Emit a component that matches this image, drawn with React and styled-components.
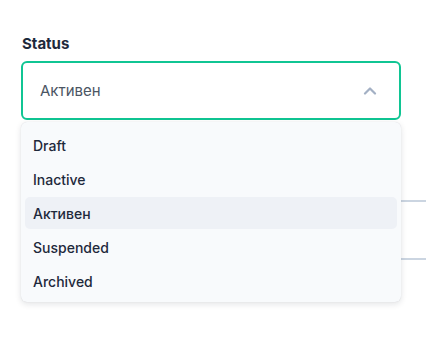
import React from "react";
import styled, { createGlobalStyle } from "styled-components";

const Global = createGlobalStyle`
  html, body { margin: 0; padding: 0; background: #ffffff; }
  body { font-family: Inter, "Noto Sans", sans-serif; -webkit-font-smoothing: antialiased; }
`;

const Page = styled.div`
  width: 426px;
  height: 341px;
  position: relative;
  overflow: hidden;
  padding: 34px 25px 0 21px;
  box-sizing: border-box;
`;

const Label = styled.div`
  font-size: 15px;
  font-weight: 700;
  color: #1e293b;
  line-height: 20px;
  margin: 0 0 7px 1px;
`;

const Field = styled.div`
  position: relative;
  width: 380px;
`;

const Trigger = styled.div`
  box-sizing: border-box;
  height: 59px;
  border: 2px solid #10c593;
  border-radius: 6px;
  display: flex;
  align-items: center;
  justify-content: space-between;
  padding: 0 22px 0 17px;
  font-size: 15px;
  color: #4b5563;
  background: #fff;
`;

const Behind = styled.div`
  display: flex;
  flex-direction: column;
  gap: 56px;
  margin-top: 80px;
  margin-left: 380px;
`;

const Line = styled.div`
  height: 2px;
  width: 30px;
  background: #cbd5e1;
`;

const Menu = styled.ul`
  position: absolute;
  top: 61px;
  left: 0;
  right: 0;
  margin: 0;
  list-style: none;
  padding: 7px 4px 5px;
  background: #f8fafc;
  border-radius: 6px;
  box-shadow: 0 2px 6px rgba(15, 23, 42, 0.12), 0 0 1px rgba(15, 23, 42, 0.15);
  display: flex;
  flex-direction: column;
  gap: 2px;
`;

const Item = styled.li`
  height: 32px;
  display: flex;
  align-items: center;
  padding: 0 8px;
  border-radius: 5px;
  font-size: 14px;
  font-weight: 500;
  color: #1e293b;
  background: ${(p) => (p.$active ? "#eef1f6" : "transparent")};
`;

const Chevron = () => (
  <svg width="14" height="9" viewBox="0 0 14 9" fill="none">
    <path d="M2 7.5L7 2.5L12 7.5" stroke="#a3b0c4" strokeWidth="2.2" strokeLinecap="round" strokeLinejoin="round" />
  </svg>
);

const options = ["Draft", "Inactive", "Активен", "Suspended", "Archived"];

export default function App() {
  return (
    <>
      <Global />
      <Page>
        <Label>Status</Label>
        <Field>
          <Trigger>
            <span>Активен</span>
            <Chevron />
          </Trigger>
          <Behind>
            <Line />
            <Line />
          </Behind>
          <Menu>
            {options.map((o) => (
              <Item key={o} $active={o === "Активен"}>{o}</Item>
            ))}
          </Menu>
        </Field>
      </Page>
    </>
  );
}
